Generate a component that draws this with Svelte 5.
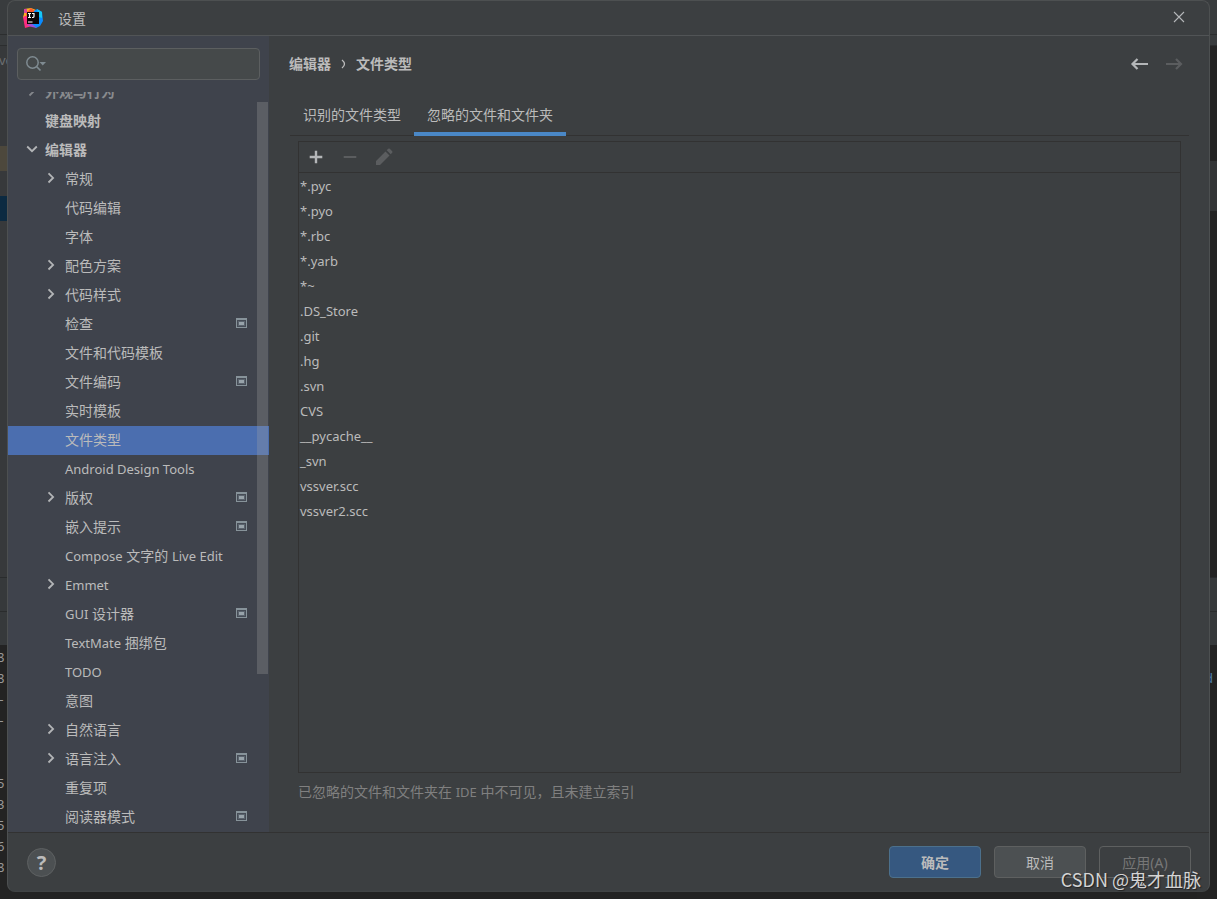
<script>
  const tree = [
    { label: '外观与行为', level: 0, arrow: 'right', bold: true, faded: true },
    { label: '键盘映射', level: 0, bold: true },
    { label: '编辑器', level: 0, arrow: 'down', bold: true },
    { label: '常规', level: 1, arrow: 'right' },
    { label: '代码编辑', level: 1 },
    { label: '字体', level: 1 },
    { label: '配色方案', level: 1, arrow: 'right' },
    { label: '代码样式', level: 1, arrow: 'right' },
    { label: '检查', level: 1, project: true },
    { label: '文件和代码模板', level: 1 },
    { label: '文件编码', level: 1, project: true },
    { label: '实时模板', level: 1 },
    { label: '文件类型', level: 1, selected: true },
    { label: 'Android Design Tools', level: 1 },
    { label: '版权', level: 1, arrow: 'right', project: true },
    { label: '嵌入提示', level: 1, project: true },
    { label: 'Compose 文字的 Live Edit', level: 1 },
    { label: 'Emmet', level: 1, arrow: 'right' },
    { label: 'GUI 设计器', level: 1, project: true },
    { label: 'TextMate 捆绑包', level: 1 },
    { label: 'TODO', level: 1 },
    { label: '意图', level: 1 },
    { label: '自然语言', level: 1, arrow: 'right' },
    { label: '语言注入', level: 1, arrow: 'right', project: true },
    { label: '重复项', level: 1 },
    { label: '阅读器模式', level: 1, project: true }
  ];
  const patterns = ['*.pyc', '*.pyo', '*.rbc', '*.yarb', '*~', '.DS_Store', '.git', '.hg', '.svn', 'CVS', '__pycache__', '_svn', 'vssver.scc', 'vssver2.scc'];
  const consoleLines = ['8', '8', '–', '–', '', '', '5', '3', '5', '6', '8'];

  // Latin runs are set one pixel smaller than the Chinese around them.
  const runs = (label) => label.match(/[!-~]+(?: [!-~]+)*|[^!-~]+/g);
  const isLatin = (run) => /^[!-~]/.test(run);
</script>

<div class="desktop">
  <div class="ide" aria-hidden="true">
    <div class="strip">
      <div class="menu"></div>
      <div class="nav"></div>
      <div class="project"><span>ve</span></div>
      <div class="tan"></div>
      <div class="gap"></div>
      <div class="blue"></div>
      <div class="tall"></div>
      <div class="bar"></div>
      <div class="bar"></div>
      <div class="console">
        {#each consoleLines as line}<span>{line}</span>{/each}
      </div>
    </div>
    <div class="strip right">
      <div class="menu"></div>
      <div class="nav"></div>
      <div class="editor"></div>
      <div class="mark"></div>
      <div class="tall"></div>
      <div class="bar"></div>
      <div class="bar"></div>
      <div class="console"><span></span><span class="link">d</span></div>
    </div>
  </div>

  <div class="dialog" role="dialog" aria-label="设置">
    <header>
      <svg class="logo" width="20" height="20" viewBox="0 0 20 20" aria-hidden="true">
        <path d="M1 1 8 0l5 2-3 8-7 2-3-3 1-3z" fill="#fdb022" />
        <path d="M0 9 5 7l3 6 1 5-7 2z" fill="#fe2d7d" />
        <path d="M8 0 12 3 10 8 4 10 3 5z" fill="#fb5a2c" />
        <path d="M1 1h3v4H1z" fill="#d8459c" />
        <path d="M11 3 14 1l5 3 1 9-3 5-4 2-5-3z" fill="#0a8cff" />
        <path d="M14 1 19 4l0 6-3-1z" fill="#16c7f5" />
        <path d="M3 17 9 16l5 4-5-1-3-1z" fill="#a24bd8" />
        <rect x="4" y="4" width="12" height="12" fill="#0b0507" />
        <path d="M5 5.500h3M6.500 5.500v4M5 9.500h3M9 5.500h2v3q0 1-1.500 1H9M5 14h4.500" fill="none" stroke="#fff" stroke-width="1.200" />
      </svg>
      <h1>设置</h1>
      <button class="icon close" aria-label="关闭">
        <svg width="12" height="12" viewBox="0 0 12 12"><path d="M1 1 11 11M11 1 1 11" stroke="#b4b6b8" stroke-width="1.100" /></svg>
      </button>
    </header>

    <div class="body">
      <aside>
        <label class="search">
          <svg width="22" height="18" viewBox="0 0 22 18" aria-hidden="true">
            <circle cx="7.500" cy="7.500" r="5.700" fill="none" stroke="#7f8b91" stroke-width="1.500" />
            <path d="m11.500 11.500 4 4" stroke="#7f8b91" stroke-width="1.700" />
            <path d="M14.500 7H21l-3.250 3.500z" fill="#7f8b91" />
          </svg>
          <input type="text" aria-label="搜索" />
        </label>
        <div class="viewport">
          <ul class="tree">
            {#each tree as item}
              <li class:child={item.level === 1} class:bold={item.bold} class:selected={item.selected} class:faded={item.faded}>
                <span class="chevron">
                  {#if item.arrow === 'right'}
                    <svg width="8" height="12" viewBox="0 0 8 12"><path d="m1.500 1.300 4.600 4.600-4.600 4.600" fill="none" stroke="#b3b5b7" stroke-width="1.800" /></svg>
                  {:else if item.arrow === 'down'}
                    <svg width="12" height="8" viewBox="0 0 12 8"><path d="m1.200 1.500 4.800 4.700 4.800-4.700" fill="none" stroke="#b3b5b7" stroke-width="1.800" /></svg>
                  {/if}
                </span>
                <span class="name">{#each runs(item.label) as run}<span class:latin={isLatin(run)}>{run}</span>{/each}</span>
                {#if item.project}
                  <svg class="badge" width="11" height="10" viewBox="0 0 11 10">
                    <path d="M0 0h11v10H0z" fill="#87939a" />
                    <path d="M1 2h9v7H1z" fill="#464c56" />
                    <path d="M2 3h7v5H2z" fill="#5b646e" />
                    <path d="M3 4h5v3H3z" fill="#98a3aa" />
                  </svg>
                {/if}
              </li>
            {/each}
          </ul>
          <div class="thumb"></div>
        </div>
      </aside>

      <main>
        <div class="crumbs">
          <span>编辑器</span>
          <svg width="5" height="10" viewBox="0 0 5 10" aria-hidden="true"><path d="M1 1q2.500 2 2.500 4T1 9" fill="none" stroke="#bbb" stroke-width="1.300" /></svg>
          <span>文件类型</span>
          <div class="history">
            <button class="icon" aria-label="后退">
              <svg width="18" height="12" viewBox="0 0 18 12"><path d="M2 6h16M7.500 1 2.500 6l5 5" fill="none" stroke="#b4b6b8" stroke-width="2.200" /></svg>
            </button>
            <button class="icon" aria-label="前进" disabled>
              <svg width="18" height="12" viewBox="0 0 18 12"><path d="M1 6h15M11 1l5 5-5 5" fill="none" stroke="#5b5d5f" stroke-width="2.200" /></svg>
            </button>
          </div>
        </div>

        <div class="tabs" role="tablist">
          <button role="tab" aria-selected="false">识别的文件类型</button>
          <button role="tab" aria-selected="true" class="active">忽略的文件和文件夹</button>
        </div>

        <section class="panel">
          <div class="toolbar">
            <button class="icon" aria-label="添加">
              <svg width="18" height="18" viewBox="0 0 18 18"><path d="M9 2.700v12.600M2.700 9h12.600" stroke="#b4b6b8" stroke-width="2.400" /></svg>
            </button>
            <button class="icon" aria-label="移除" disabled>
              <svg width="18" height="18" viewBox="0 0 18 18"><path d="M2.700 9h12.600" stroke="#5b5d5f" stroke-width="2.200" /></svg>
            </button>
            <button class="icon" aria-label="编辑" disabled>
              <svg width="18" height="18" viewBox="0 0 18 18"><path d="M1 17v-4L10.500 3.500l4 4L5 17zM11.700 2.300 13.200.800q.8-.6 1.600 0l2.400 2.400q.6.8 0 1.600l-1.500 1.500z" fill="#5b5d5f" /></svg>
            </button>
          </div>
          <ul class="patterns">
            {#each patterns as pattern}<li>{pattern}</li>{/each}
          </ul>
        </section>
        <p class="note">已忽略的文件和文件夹在 <span class="latin">IDE</span> 中不可见，且未建立索引</p>
      </main>
    </div>

    <footer>
      <button class="help" aria-label="帮助">?</button>
      <button class="action primary">确定</button>
      <button class="action">取消</button>
      <button class="action" disabled>应用(A)</button>
    </footer>
  </div>
  <div class="watermark">CSDN @鬼才血脉</div>
</div>

<style>
  :global(body) { background: #232323; }
  * { box-sizing: border-box; }
  .desktop {
    position: relative;
    display: flex;
    min-height: 100vh;
    padding: 0 7px 7px;
    overflow: hidden;
    color: #bbb;
    font: 14px/20px 'Noto Sans', 'Noto Sans CJK SC', sans-serif;
  }
  button, input { font: inherit; color: inherit; }
  button { padding: 0; border: 0; background: none; }
  svg { display: block; flex: none; }
  ul { margin: 0; padding: 0; list-style: none; }

  .ide {
    position: absolute;
    inset: 0;
    display: flex;
    justify-content: space-between;
    background: #222;
  }
  .strip { display: flex; flex-direction: column; width: 20px; background: #37393b; overflow: hidden; font-size: 13px; }
  .strip > div { flex: none; }
  .menu { height: 35px; background: #393c3e; border-bottom: 1px solid #2c2e2f; }
  .nav { height: 11px; background: #393c3e; border-bottom: 1px solid #2c2e2f; }
  .project { height: 100px; padding-top: 4px; color: #6d6f71; }
  .project span { margin-left: -1px; }
  .tan { height: 25px; background: #4d483c; }
  .gap { height: 25px; }
  .blue { height: 25px; background: #0c2a41; }
  .strip .tall { height: 356px; }
  .bar { height: 34px; border-top: 1px solid #2a2c2d; background: #36393b; }
  .strip .console { flex: 1; display: flex; flex-direction: column; background: #232323; color: #999; padding-top: 2px; }
  .console span { height: 21px; margin-left: -3px; }
  .right { background: #242424; }
  .editor { height: 115px; background: #242424; }
  .mark { height: 50px; background: #333536; }
  .right .tall { height: 366px; background: #242424; }
  .console .link { margin-left: 8px; color: #4d7da8; }

  .dialog {
    position: relative;
    flex: 1;
    display: flex;
    flex-direction: column;
    border: 1px solid #4d5051;
    border-bottom-color: #404344;
    border-radius: 8px;
    background: #3c3f41;
    overflow: hidden;
  }
  header { display: flex; align-items: center; height: 35px; padding: 0 24px 0 15px; border-bottom: 1px solid #515456; }
  h1 { margin: 2px 0 0 15px; font: inherit; }
  .close { margin: 0 0 2px auto; }
  .icon { display: flex; align-items: center; justify-content: center; }

  .body { flex: 1; display: flex; min-height: 0; }
  aside { flex: none; display: flex; flex-direction: column; width: 261px; background: #3f434c; }
  .search {
    display: flex;
    align-items: center;
    height: 32px;
    margin: 12px 9px;
    padding-left: 7px;
    border: 1px solid #5c5f60;
    border-radius: 4px;
    background: #45494a;
  }
  .search input { flex: 1; min-width: 0; border: 0; outline: 0; background: none; }
  .viewport { position: relative; flex: 1 0 740px; overflow: hidden; }
  .tree { display: flex; flex-direction: column; margin-top: -14px; }
  li { white-space: nowrap; }
  .tree li { display: flex; align-items: center; height: 29px; padding: 0 0 4px 16px; }
  .tree .child { padding-left: 35px; }
  .name { margin-top: 2px; }
  .latin { font-size: 13px; }
  .bold { font-weight: 700; }
  .faded { opacity: 0.6; }
  .tree .selected { background: #4b6eaf; }
  .chevron { display: flex; justify-content: center; width: 16px; margin-right: 5px; }
  .child .chevron { margin-right: 6px; }
  .badge { margin: 0 22px 0 auto; }
  .thumb { position: absolute; top: 10px; right: 1px; width: 11px; height: 572px; background: rgb(166 166 166 / 28%); }

  main { flex: 1; min-width: 0; display: flex; flex-direction: column; padding: 0 20px; }
  .crumbs { display: flex; align-items: center; gap: 10px; height: 56px; font-weight: 700; }
  .history { display: flex; gap: 17px; margin-left: auto; padding-right: 6px; }
  .tabs { display: flex; height: 44px; margin: 0 0 5px 1px; border-bottom: 1px solid #323232; }
  .tabs button { height: 44px; padding: 5px 13px 0; border-bottom: 4px solid transparent; }
  .tabs .active { border-color: #4a88c7; }
  .panel { flex: 1; margin: 0 8px 0 9px; border: 1px solid #323232; }
  .toolbar { display: flex; align-items: center; gap: 16px; height: 31px; padding-left: 8px; border-bottom: 1px solid #323232; }
  .patterns { padding: 1px; font-size: 13px; }
  .patterns li { height: 25px; line-height: 25px; }
  .note { margin: 9px 9px 30px; color: #808080; }

  footer { display: flex; align-items: center; gap: 13px; height: 59px; padding: 0 18px 0 19px; border-top: 1px solid #323232; }
  .help { width: 29px; height: 29px; margin-right: auto; border: 1px solid #5e6162; border-radius: 50%; background: #4c5052; font-size: 20px; font-weight: 700; line-height: 27px; }
  .action { width: 92px; height: 32px; padding-top: 2px; border: 1px solid #5e6060; border-radius: 4px; background: #4c5052; }
  .primary { border-color: #4c708c; background: #365880; font-weight: 700; }
  .action:disabled { background: none; color: #777; }
  .watermark {
    position: absolute;
    right: 16px;
    bottom: 8px;
    color: #d4d4d4;
    font: 18px/24px 'Noto Sans CJK SC', sans-serif;
    text-shadow: 1px 1px 1px #222;
  }
</style>
